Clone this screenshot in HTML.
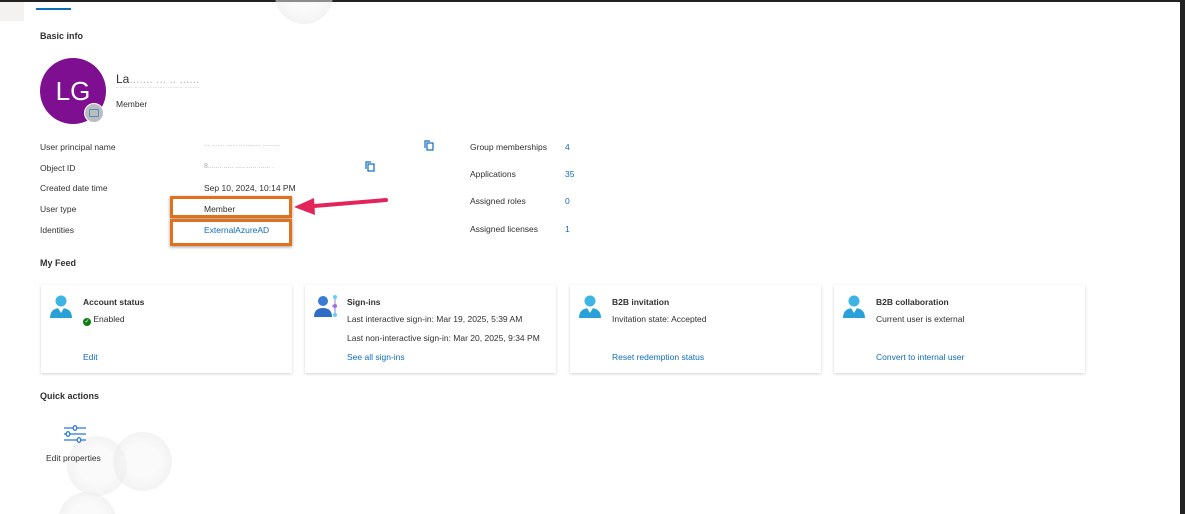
<!DOCTYPE html>
<html style="overflow:hidden;width:1185px;height:514px"><head><meta charset="utf-8"><style>
*{margin:0;padding:0;box-sizing:border-box}
body{width:1185px;height:514px;background:#fff;position:relative;overflow:hidden;font-family:"Liberation Sans",sans-serif;font-size:8.5px;color:#323130}
.a{position:absolute;white-space:nowrap}
.b{font-weight:bold}
.l{color:#0f6cbd}
.card{position:absolute;top:285px;width:251px;height:88px;background:#fff;box-shadow:0 1px 3px rgba(0,0,0,.18)}
.card .t{position:absolute;left:42px;top:12px;font-weight:bold}
.card .s{position:absolute;left:42px;top:29px}
.card .s2{position:absolute;left:42px;top:48px}
.card .k{position:absolute;left:42px;top:67px;color:#0f6cbd}
.card svg{position:absolute;left:9px;top:10px}
.circ{position:absolute;border-radius:50%;background:radial-gradient(circle,rgba(245,245,245,.5) 40%,rgba(225,225,225,.6) 100%)}
.ob{position:absolute;left:170px;width:122px;border:3px solid #e2711d;box-shadow:0 1px 3px rgba(0,0,0,.4)}
</style></head><body>
<div class="a" style="left:0;top:0;width:1185px;height:2px;background:#222"></div>
<div class="a" style="left:1180px;top:0;width:5px;height:514px;background:#222"></div>
<div class="a" style="left:0;top:2px;width:24px;height:19px;background:#f3f2f1"></div>
<div class="a" style="left:36px;top:8px;width:35px;height:2px;background:#0f6cbd"></div>
<div class="a" style="left:275px;top:0;width:58px;height:24px;overflow:hidden"><div class="circ" style="left:0;top:-34px;width:58px;height:58px"></div></div>

<div class="a b" style="left:40px;top:31px;font-size:9px">Basic info</div>
<div class="a" style="left:40px;top:58px;width:66px;height:66px;border-radius:50%;background:#7d0f90;color:#fff;font-size:26px;text-align:center;line-height:66px">LG</div>
<div class="a" style="left:84px;top:103px;width:20px;height:20px;border-radius:50%;background:#bdbdbd;border:1px solid #fff"></div>
<div class="a" style="left:89px;top:109px;width:10px;height:8px;border:1.5px solid #4a8fd6;border-radius:1px"></div>
<div class="a" style="left:116px;top:72px;font-size:12px">La<span style="color:#bbb">.......  ...  .. ......</span></div>
<div class="a" style="left:116px;top:84px;font-size:6px;color:#bbb">..........  .......  ..........  ..........  .........</div>
<div class="a" style="left:116px;top:99px">Member</div>

<div class="a" style="left:40px;top:142px">User principal name</div>
<div class="a" style="left:40px;top:163px">Object ID</div>
<div class="a" style="left:40px;top:183px">Created date time</div>
<div class="a" style="left:40px;top:204px">User type</div>
<div class="a" style="left:40px;top:225px">Identities</div>
<div class="a" style="left:204px;top:142px;color:#aaa;font-size:6px">....   .......  .......   .............   ...........</div>
<div class="a" style="left:204px;top:163px;color:#aaa;font-size:7px">8.......  .....  .....  .....  ......  .</div>
<svg class="a" style="left:424px;top:140px" width="10" height="11" fill="none" stroke="#0f6cbd" stroke-width="1.2"><rect x="3" y="3" width="6" height="7"/><path d="M1 8V1H6"/></svg>
<svg class="a" style="left:365px;top:161px" width="10" height="11" fill="none" stroke="#0f6cbd" stroke-width="1.2"><rect x="3" y="3" width="6" height="7"/><path d="M1 8V1H6"/></svg>
<div class="a" style="left:204px;top:183px">Sep 10, 2024, 10:14 PM</div>
<div class="ob" style="top:196px;height:22px"></div>
<div class="ob" style="top:219px;height:27px"></div>
<div class="a" style="left:204px;top:204px">Member</div>
<div class="a l" style="left:204px;top:225px">ExternalAzureAD</div>
<svg class="a" style="left:290px;top:193px" width="102" height="24"><path d="M96 7 L24 13" stroke="#e3245a" stroke-width="4" stroke-linecap="round" fill="none"/><path d="M4 14 L24 5 L25 22 Z" fill="#e3245a"/></svg>

<div class="a" style="left:470px;top:142px">Group memberships</div>
<div class="a" style="left:470px;top:169px">Applications</div>
<div class="a" style="left:470px;top:196px">Assigned roles</div>
<div class="a" style="left:470px;top:224px">Assigned licenses</div>
<div class="a l" style="left:565px;top:142px">4</div>
<div class="a l" style="left:565px;top:169px">35</div>
<div class="a l" style="left:565px;top:196px">0</div>
<div class="a" style="left:565px;top:224px;color:#0f6cbd">1</div>

<div class="a b" style="left:40px;top:258px;font-size:9px">My Feed</div>

<div class="card" style="left:41px"><svg width="22" height="24"><circle cx="11" cy="6" r="5.5" fill="#3db4e6"/><path d="M0 23 Q0 13 11 13 Q22 13 22 23Z" fill="#2aa0d8"/><path d="M8 13 L11 18 L14 13Z" fill="#fff"/></svg><div class="t">Account status</div><div class="s"><span style="display:inline-block;width:8px;height:8px;border-radius:50%;background:#107c10;color:#fff;font-size:6px;text-align:center;line-height:8px;vertical-align:-1px">✓</span> Enabled</div><div class="k">Edit</div></div>
<div class="card" style="left:305px"><svg width="24" height="24"><circle cx="9" cy="6" r="5" fill="#3a7bd5"/><path d="M0 22 Q0 13 9 13 Q18 13 18 22Z" fill="#2e6cc6"/><path d="M21 2 V20 M18 11 H21" stroke="#9b7de0" stroke-width="1"/><circle cx="21" cy="2" r="2" fill="#5ad3f4"/><circle cx="21" cy="11" r="2" fill="#a06de0"/><circle cx="21" cy="20" r="2" fill="#5ad3f4"/></svg><div class="t">Sign-ins</div><div class="s">Last interactive sign-in: Mar 19, 2025, 5:39 AM</div><div class="s2">Last non-interactive sign-in: Mar 20, 2025, 9:34 PM</div><div class="k">See all sign-ins</div></div>
<div class="card" style="left:570px"><svg width="22" height="24"><circle cx="11" cy="6" r="5.5" fill="#3db4e6"/><path d="M0 23 Q0 13 11 13 Q22 13 22 23Z" fill="#2aa0d8"/><path d="M8 13 L11 18 L14 13Z" fill="#fff"/></svg><div class="t">B2B invitation</div><div class="s">Invitation state: Accepted</div><div class="k">Reset redemption status</div></div>
<div class="card" style="left:834px"><svg width="22" height="24"><circle cx="11" cy="6" r="5.5" fill="#3db4e6"/><path d="M0 23 Q0 13 11 13 Q22 13 22 23Z" fill="#2aa0d8"/><path d="M8 13 L11 18 L14 13Z" fill="#fff"/></svg><div class="t">B2B collaboration</div><div class="s">Current user is external</div><div class="k">Convert to internal user</div></div>

<div class="a b" style="left:40px;top:391px;font-size:9px">Quick actions</div>
<div class="a" style="left:0;top:400px;width:200px;height:114px;overflow:hidden">
<div class="circ" style="left:67px;top:36px;width:60px;height:60px"></div>
<div class="circ" style="left:113px;top:32px;width:59px;height:59px"></div>
<div class="circ" style="left:58px;top:92px;width:58px;height:58px"></div>
</div>
<svg class="a" style="left:63px;top:425px" width="24" height="18" stroke="#2b79d6" stroke-width="1.3" fill="#fff"><path d="M1 3H23M1 9H23M1 15H23"/><ellipse cx="12" cy="3" rx="1.8" ry="2.3"/><ellipse cx="5" cy="9" rx="1.8" ry="2.3"/><ellipse cx="16" cy="15" rx="1.8" ry="2.3"/></svg>
<div class="a" style="left:46px;top:453px">Edit properties</div>
</body></html>
